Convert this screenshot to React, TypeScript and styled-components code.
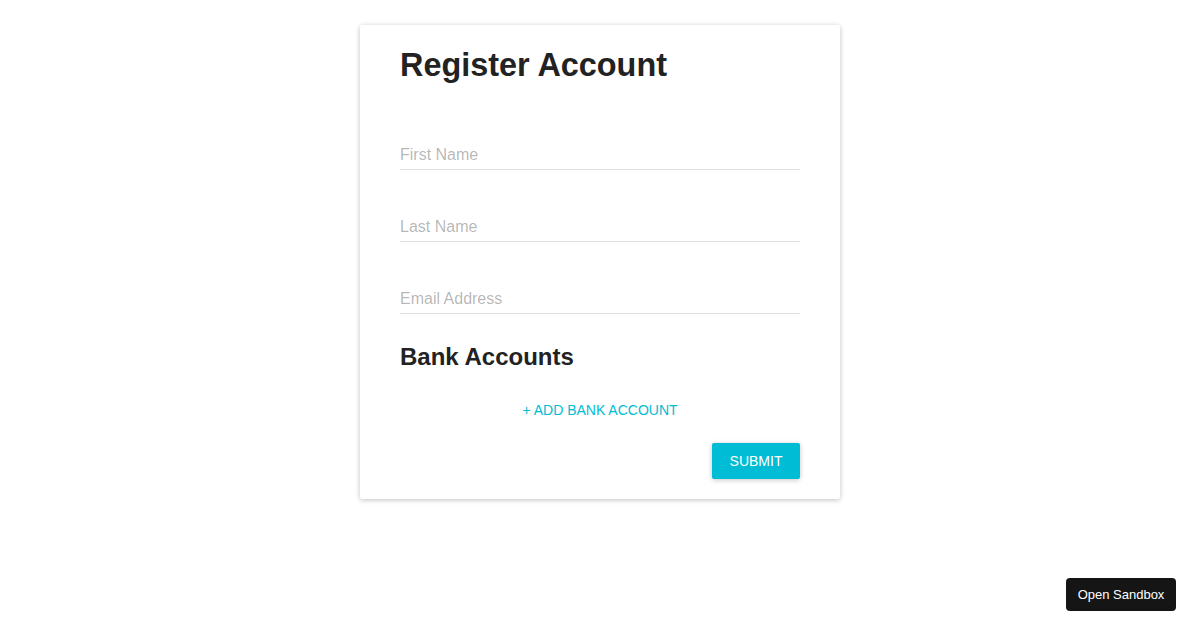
import React from "react";
import styled, { createGlobalStyle } from "styled-components";

const GlobalStyle = createGlobalStyle`
  html, body { margin: 0; padding: 0; background: #fff; }
  body { font-family: "Liberation Sans", Arial, sans-serif; }
`;

const Page = styled.div`
  display: flex;
  justify-content: center;
  padding: 25px 0 40px;
`;

const Card = styled.form`
  width: 480px;
  box-sizing: border-box;
  display: flex;
  flex-direction: column;
  padding: 0 40px 20px;
  background: #fff;
  border-radius: 2px;
  box-shadow: rgba(0, 0, 0, 0.12) 0 1px 6px, rgba(0, 0, 0, 0.14) 0 1px 4px;
`;

const Title = styled.h1`
  margin: 22px 0 22px;
  font-size: 32.4px;
  line-height: 37px;
  font-weight: 700;
  color: #222;
`;

const Field = styled.div`
  height: 72px;
  box-sizing: border-box;
  padding-top: 34px;
`;

const Input = styled.input`
  display: block;
  width: 100%;
  height: 29px;
  box-sizing: content-box;
  padding: 0;
  border: none;
  border-bottom: 1px solid #e0e0e0;
  outline: none;
  background: transparent;
  font-family: "Liberation Sans", Arial, sans-serif;
  font-size: 16px;
  color: rgba(0, 0, 0, 0.87);
  &::placeholder { color: rgba(0, 0, 0, 0.3); }
`;

const Subtitle = styled.h2`
  margin: 21px 0 22px;
  font-size: 24px;
  line-height: 27px;
  font-weight: 700;
  color: #222;
`;

const CenterRow = styled.div`
  display: flex;
  justify-content: center;
`;

const FlatButton = styled.button`
  height: 36px;
  padding: 0 16px;
  border: none;
  background: transparent;
  color: #00bcd4;
  font-family: "Liberation Sans", Arial, sans-serif;
  font-size: 14px;
  line-height: 36px;
  text-transform: uppercase;
  cursor: pointer;
`;

const ActionRow = styled.div`
  display: flex;
  justify-content: flex-end;
  margin-top: 15px;
`;

const RaisedButton = styled.button`
  height: 36px;
  min-width: 88px;
  padding: 0 16px;
  border: none;
  border-radius: 2px;
  background: #00bcd4;
  color: #fff;
  font-family: "Liberation Sans", Arial, sans-serif;
  font-size: 14px;
  line-height: 36px;
  text-transform: uppercase;
  box-shadow: rgba(0, 0, 0, 0.12) 0 1px 6px, rgba(0, 0, 0, 0.12) 0 1px 4px;
  cursor: pointer;
`;

const SandboxButton = styled.a`
  position: fixed;
  right: 24px;
  bottom: 19px;
  width: 110px;
  height: 33px;
  box-sizing: border-box;
  display: flex;
  align-items: center;
  justify-content: center;
  background: #151515;
  border-radius: 4px;
  color: #fff;
  font-family: "Liberation Sans", Arial, sans-serif;
  font-size: 13px;
  text-decoration: none;
`;

export default function App() {
  return (
    <>
      <GlobalStyle />
      <Page>
        <Card onSubmit={(e) => e.preventDefault()}>
          <Title>Register Account</Title>
          <Field>
            <Input placeholder="First Name" />
          </Field>
          <Field>
            <Input placeholder="Last Name" />
          </Field>
          <Field>
            <Input placeholder="Email Address" />
          </Field>
          <Subtitle>Bank Accounts</Subtitle>
          <CenterRow>
            <FlatButton type="button">+ Add Bank Account</FlatButton>
          </CenterRow>
          <ActionRow>
            <RaisedButton type="submit">Submit</RaisedButton>
          </ActionRow>
        </Card>
      </Page>
      <SandboxButton href="#">Open Sandbox</SandboxButton>
    </>
  );
}
